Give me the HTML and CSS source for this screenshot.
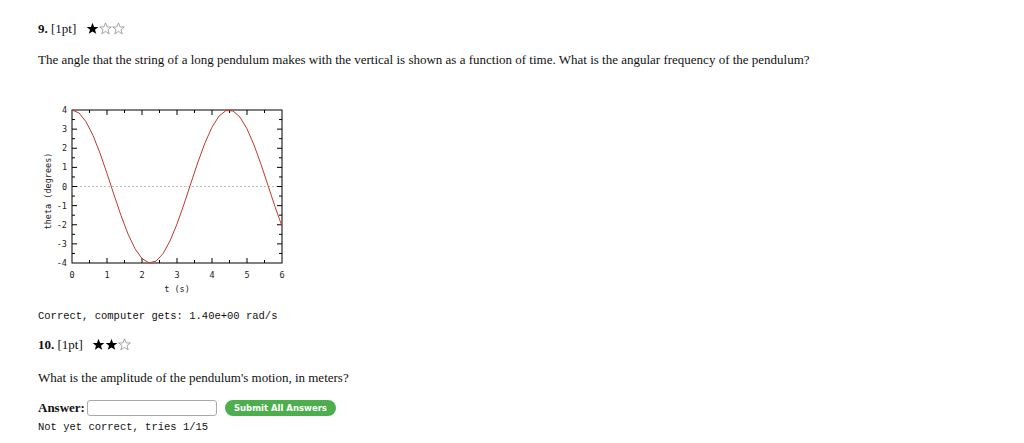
FILE: index.html
```html
<!DOCTYPE html>
<html>
<head>
<meta charset="utf-8">
<link rel="stylesheet" href="styles.css">
</head>
<body>
<div class="page">
  <div class="qhead"><b>9.</b> [1pt] <span class="stars">
    <svg class="star" viewBox="0 0 24 24"><polygon class="full" points="12,1.5 14.9,9 22.8,9.2 16.6,14.1 18.8,21.8 12,17.4 5.2,21.8 7.4,14.1 1.2,9.2 9.1,9"/></svg><svg class="star" viewBox="0 0 24 24"><polygon class="empty" points="12,1.5 14.9,9 22.8,9.2 16.6,14.1 18.8,21.8 12,17.4 5.2,21.8 7.4,14.1 1.2,9.2 9.1,9"/></svg><svg class="star" viewBox="0 0 24 24"><polygon class="empty" points="12,1.5 14.9,9 22.8,9.2 16.6,14.1 18.8,21.8 12,17.4 5.2,21.8 7.4,14.1 1.2,9.2 9.1,9"/></svg>
  </span></div>
  <p class="qtext">The angle that the string of a long pendulum makes with the vertical is shown as a function of time. What is the angular frequency of the pendulum?</p>
  <svg class="chart" width="270" height="200" viewBox="0 0 270 200">
    <line class="zero" x1="42" y1="85.5" x2="252" y2="85.5"/>
    <path class="ticks" d="M42 28.125h5M42 47.25h5M42 66.375h5M42 85.5h5M42 104.625h5M42 123.75h5M42 142.875h5
      M42 18.56h3M42 37.69h3M42 56.81h3M42 75.94h3M42 95.06h3M42 114.19h3M42 133.31h3M42 152.44h3
      M252 28.125h-5M252 47.25h-5M252 66.375h-5M252 85.5h-5M252 104.625h-5M252 123.75h-5M252 142.875h-5
      M252 18.56h-3M252 37.69h-3M252 56.81h-3M252 75.94h-3M252 95.06h-3M252 114.19h-3M252 133.31h-3M252 152.44h-3
      M77 162v-5M112 162v-5M147 162v-5M182 162v-5M217 162v-5
      M59.5 162v-3M94.5 162v-3M129.5 162v-3M164.5 162v-3M199.5 162v-3M234.5 162v-3
      M77 9v5M112 9v5M147 9v5M182 9v5M217 9v5
      M59.5 9v3M94.5 9v3M129.5 9v3M164.5 9v3M199.5 9v3M234.5 9v3"/>
    <rect class="frame" x="42" y="9" width="210" height="153"/>
    <polyline class="curve" points="42,9 49,11.98 56,20.68 63,34.44 70,52.17 77,72.5 84,93.82 91,114.53 98,132.97 105,147.69 112,157.58 119,161.86 126,160.16 133,152.7 140,139.97 147,123.01 154,103.12 161,81.86 168,60.88 175,41.83 182,26.17 189,15.14 196,9.58 203,9.94 210,16.18 217,27.83 224,43.97 231,63.34 238,84.43 245,105.63 252,125.23"/>
    <g class="ylab">
      <text x="37" y="12">4</text>
      <text x="37" y="31">3</text>
      <text x="37" y="50">2</text>
      <text x="37" y="69">1</text>
      <text x="37" y="88.5">0</text>
      <text x="37" y="107.5">-1</text>
      <text x="37" y="126.5">-2</text>
      <text x="37" y="146">-3</text>
      <text x="37" y="165">-4</text>
    </g>
    <g class="xlab">
      <text x="42" y="177">0</text>
      <text x="77" y="177">1</text>
      <text x="112" y="177">2</text>
      <text x="147" y="177">3</text>
      <text x="182" y="177">4</text>
      <text x="217" y="177">5</text>
      <text x="252" y="177">6</text>
      <text x="147" y="191">t (s)</text>
    </g>
    <text class="axtitle" transform="translate(21,90) rotate(-90)">theta (degrees)</text>
  </svg>
  <div class="mono result">Correct, computer gets: 1.40e+00 rad/s</div>
  <div class="qhead q10"><b>10.</b> [1pt] <span class="stars">
    <svg class="star" viewBox="0 0 24 24"><polygon class="full" points="12,1.5 14.9,9 22.8,9.2 16.6,14.1 18.8,21.8 12,17.4 5.2,21.8 7.4,14.1 1.2,9.2 9.1,9"/></svg><svg class="star" viewBox="0 0 24 24"><polygon class="full" points="12,1.5 14.9,9 22.8,9.2 16.6,14.1 18.8,21.8 12,17.4 5.2,21.8 7.4,14.1 1.2,9.2 9.1,9"/></svg><svg class="star" viewBox="0 0 24 24"><polygon class="empty" points="12,1.5 14.9,9 22.8,9.2 16.6,14.1 18.8,21.8 12,17.4 5.2,21.8 7.4,14.1 1.2,9.2 9.1,9"/></svg>
  </span></div>
  <p class="qtext q10text">What is the amplitude of the pendulum's motion, in meters?</p>
  <div class="answer">
    <b>Answer:</b><input class="field" type="text"><button class="submit">Submit All Answers</button>
  </div>
  <div class="mono status">Not yet correct, tries 1/15</div>
</div>
</body>
</html>
```
FILE: styles.css
```css
html, body {
  margin: 0;
  padding: 0;
  background: #fff;
}
body {
  font-family: "Liberation Serif", "Times New Roman", serif;
  font-size: 13px;
  color: #111;
}
.page {
  padding: 20px 0 0 38px;
}
.qhead {
  height: 17px;
  line-height: 17px;
  display: flex;
  align-items: center;
  white-space: pre;
}
.qhead b { font-weight: bold; }
.stars {
  display: inline-flex;
  margin-left: 6px;
}
.star {
  width: 13px;
  height: 13px;
  display: block;
}
.full { fill: #000; }
.empty { fill: none; stroke: #777; stroke-width: 1.2; }
.qtext {
  margin: 15px 0 0 0;
  line-height: 16px;
}
.chart {
  display: block;
  margin: 33px 0 0 -8px;
}
.zero { stroke: #bbb; stroke-width: 1; stroke-dasharray: 2 2; }
.ticks { stroke: #000; stroke-width: 1; fill: none; }
.frame { fill: none; stroke: #000; stroke-width: 1; }
.curve { fill: none; stroke: #c0392b; stroke-width: 1; stroke-linejoin: round; }
.ylab text { font-family: "DejaVu Sans Mono", monospace; font-size: 8.5px; fill: #222; text-anchor: end; }
.xlab text { font-family: "DejaVu Sans Mono", monospace; font-size: 8.5px; fill: #222; text-anchor: middle; }
.axtitle { font-family: "DejaVu Sans Mono", monospace; font-size: 8.5px; fill: #222; text-anchor: middle; }
.mono {
  font-family: "Liberation Mono", "Courier New", monospace;
  font-size: 10.5px;
  line-height: 14px;
}
.result { margin-top: 8px; }
.q10 { margin-top: 13px; }
.q10text { margin-top: 17px; }
.answer {
  margin-top: 13px;
  display: flex;
  align-items: center;
  height: 18px;
}
.answer b { font-size: 13px; }
.field {
  width: 130px;
  height: 16px;
  box-sizing: border-box;
  margin: 0 0 0 2px;
  border: 1px solid #aaa;
  border-radius: 3px;
  padding: 0;
}
.submit {
  margin-left: 8px;
  width: 111px;
  height: 16px;
  border: none;
  border-radius: 8px;
  background: #4cae4c;
  color: #fff;
  font-family: "DejaVu Sans", Verdana, sans-serif;
  font-weight: bold;
  font-size: 8.5px;
  padding: 0;
}
.status { margin-top: 3px; }
```
